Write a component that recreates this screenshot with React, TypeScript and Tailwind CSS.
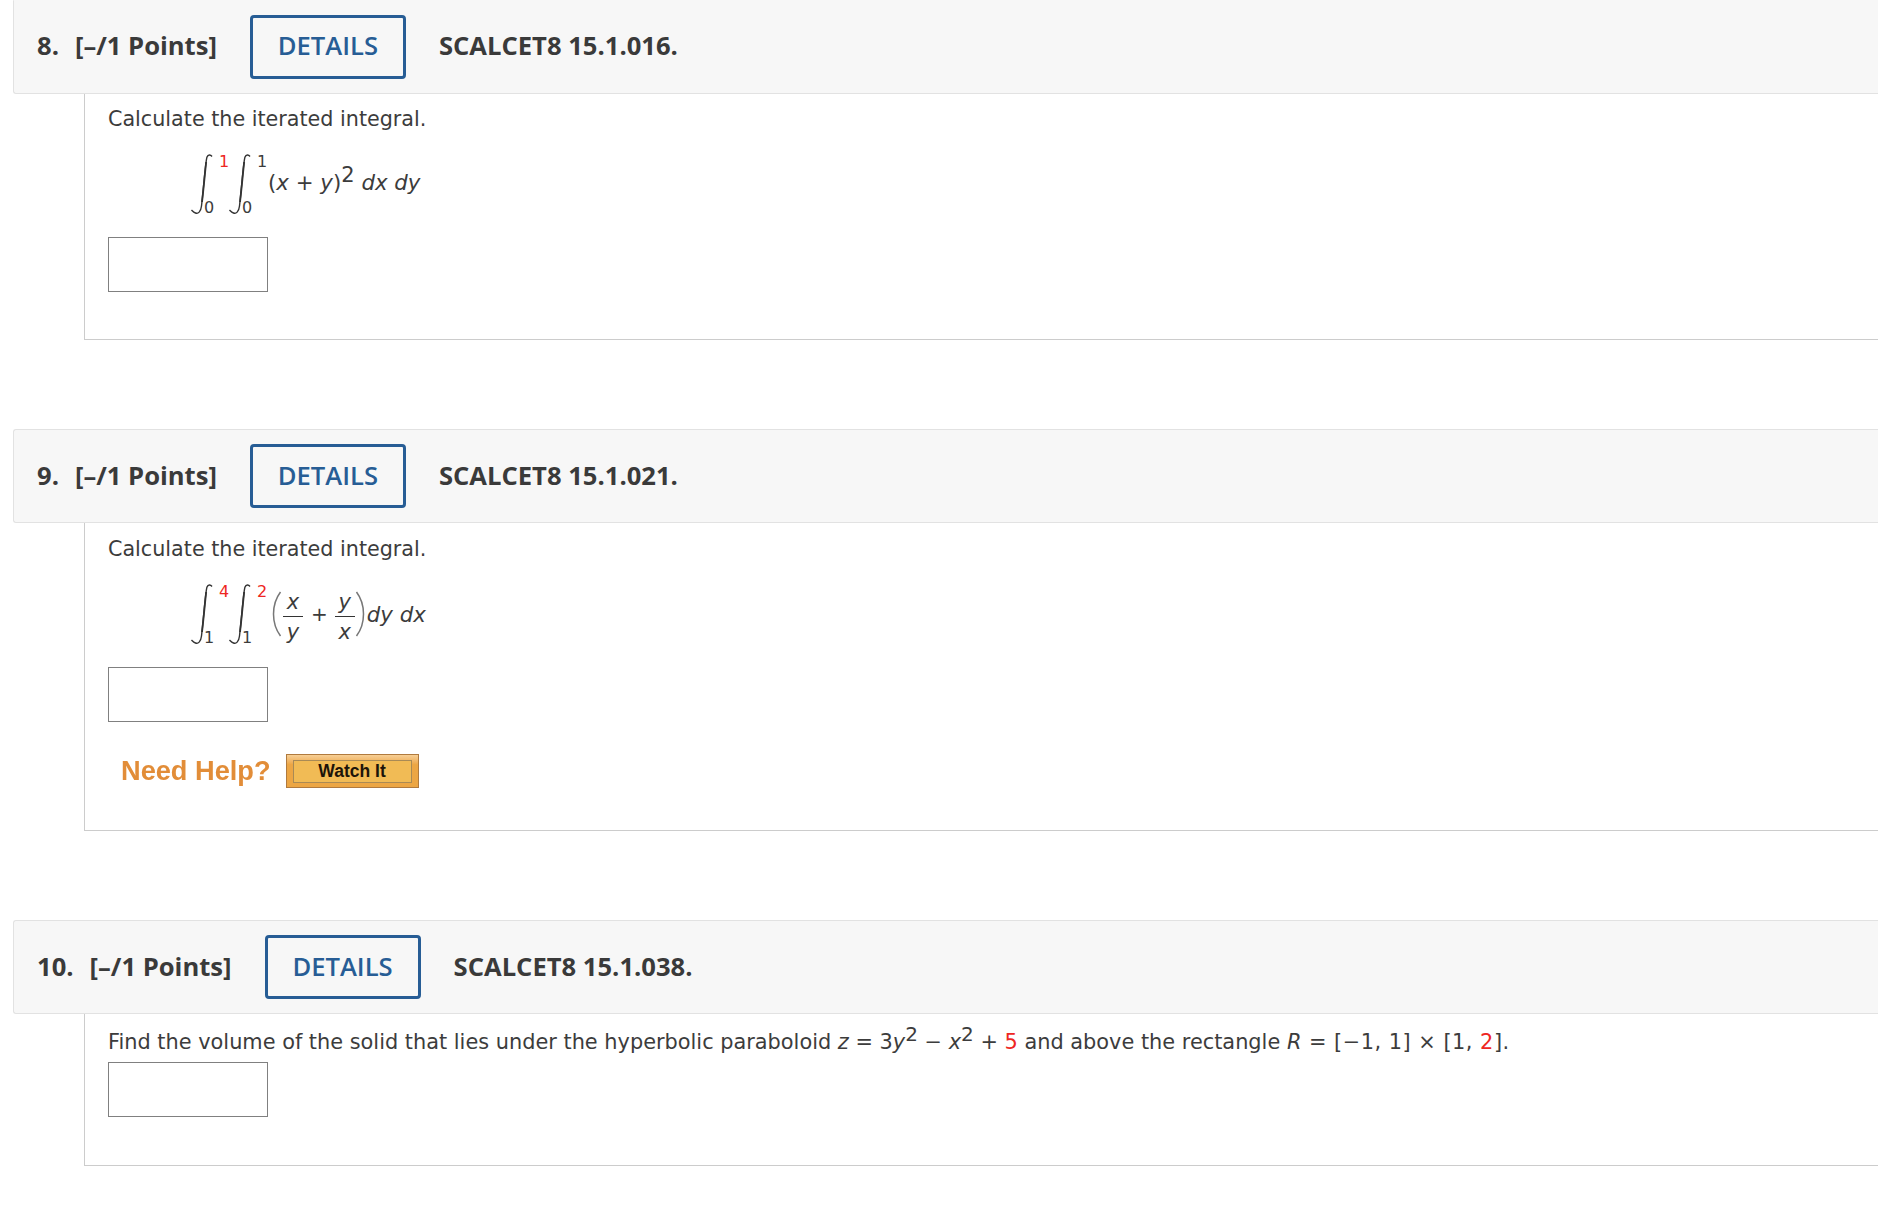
import React from "react";

const mathFont = "font-['DejaVu_Sans',Verdana,sans-serif]";

// tall integral sign, the source page has it as a small image
function IntegralSign() {
  return (
    <svg width="24" height="60" viewBox="0 0 24 60" className="shrink-0" fill="none">
      <path d="M22 2.5 C20.5 0.5 18 0.5 17 3 C15.5 7 14 30 11.5 52 C10.8 58 8 60 5.5 59 C3.5 58.3 2.5 57 1.5 56" stroke="#333" strokeWidth="1.4" />
      <path d="M16.2 8 C15 18 13.5 36 12 48" stroke="#333" strokeWidth="1.8" />
    </svg>
  );
}

function Integral({ upper, lower, red, gapRight }: { upper: string; lower: string; red?: boolean; gapRight: string }) {
  return (
    <div className={`flex h-[60px] items-stretch ${gapRight}`}>
      <IntegralSign />
      <div className="ml-[-10px] flex flex-col justify-between text-[16px] leading-[16px]">
        <div className={`ml-[15px] ${red ? "text-[#ee2622]" : "text-[#3c3c3c]"}`}>{upper}</div>
        <div className="mb-[-2px]">{lower}</div>
      </div>
    </div>
  );
}

function Fraction({ top, bottom }: { top: string; bottom: string }) {
  return (
    <div className="mt-[3px] flex w-[20px] flex-col items-center text-[21px] italic">
      <div className="h-[30px] w-full text-center leading-[32px]">{top}</div>
      <div className="h-px w-full bg-[#333]" />
      <div className="h-[29px] w-full text-center leading-[31px]">{bottom}</div>
    </div>
  );
}

function BigParen({ flip }: { flip?: boolean }) {
  return (
    <svg width="10" height="46" viewBox="0 0 10 46" fill="none" className={flip ? "-scale-x-100" : ""}>
      <path d="M8.5 1 C2.5 9 1.5 16 1.5 23 C1.5 30 2.5 37 8.5 45" stroke="#777" strokeWidth="1.5" />
    </svg>
  );
}

function AnswerBox() {
  return <div className="h-[55px] w-[160px] border border-[#808080] bg-white" />;
}

function Question({
  num,
  code,
  numGap,
  headClass = "",
  bodyClass,
  children,
}: {
  num: string;
  code: string;
  numGap: string;
  headClass?: string;
  bodyClass: string;
  children: React.ReactNode;
}) {
  return (
    <div>
      <div className={`flex h-[94px] items-center rounded-l-[3px] border border-r-0 border-[#e2e2e2] bg-[#f7f7f7] pl-[23px] font-['Open_Sans',sans-serif] text-[25.6px] font-bold text-[#3a3a3a] ${headClass}`}>
        <span className={numGap}>{num}</span>
        <span>[–/1 Points]</span>
        <div className="ml-[33px] flex h-[64px] w-[156px] items-center justify-center rounded-[4px] border-[3px] border-[#275d95] text-[25.6px] font-semibold text-[#275d95]">
          DETAILS
        </div>
        <span className="ml-[33px]">{code}</span>
      </div>
      <div className={`ml-[71px] border-b border-l border-[#cccccc] pl-[23px] ${mathFont} text-[#3c3c3c] ${bodyClass}`}>{children}</div>
    </div>
  );
}

export default function App() {
  return (
    <div className="h-[1208px] w-full overflow-hidden bg-white pl-[13px]">
      <div className="flex flex-col gap-[89px]">
        <Question num="8." code="SCALCET8 15.1.016." numGap="mr-[16px]" headClass="rounded-tl-none border-t-[#f7f7f7] pb-px" bodyClass="h-[246px]">
          <p className="pt-[10px] text-[20.7px] leading-[30px]">Calculate the iterated integral.</p>
          <div className="ml-[82px] mt-[20px] flex items-center text-[21.3px]">
            <Integral upper="1" lower="0" red gapRight="w-[38px]" />
            <Integral upper="1" lower="0" gapRight="w-[40px]" />
            <span className="mt-[-3px] whitespace-pre">
              (<i>x</i> + <i>y</i>)<sup className="top-[-0.36em] text-[21px]">2</sup> <i>dx dy</i>
            </span>
          </div>
          <div className="mt-[23px]">
            <AnswerBox />
          </div>
        </Question>

        <Question num="9." code="SCALCET8 15.1.021." numGap="mr-[16px]" bodyClass="h-[308px]">
          <p className="pt-[11px] text-[20.7px] leading-[30px]">Calculate the iterated integral.</p>
          <div className="ml-[82px] mt-[20px] flex h-[60px] items-center text-[21.3px]">
            <Integral upper="4" lower="1" red gapRight="w-[38px]" />
            <Integral upper="2" lower="1" red gapRight="w-[44px]" />
            <BigParen />
            <div className="ml-px">
              <Fraction top="x" bottom="y" />
            </div>
            <span className="ml-[8px] mr-[7px] text-[20px]">+</span>
            <Fraction top="y" bottom="x" />
            <BigParen flip />
            <span className="ml-[2px] mt-[2px] whitespace-pre italic">dy dx</span>
          </div>
          <div className="mt-[23px]">
            <AnswerBox />
          </div>
          <div className="mt-[32px] flex items-center pl-[13px]">
            <span className="font-['Liberation_Sans',sans-serif] text-[27.2px] font-bold leading-[34px] text-[#e28d38] blur-[0.4px]">Need Help?</span>
            <div className="ml-[15px] flex h-[34px] w-[133px] items-center justify-center border border-[#b07a3e] bg-gradient-to-b from-[#f7cf95] to-[#eca644] to-30%">
              <div className="flex h-[23px] w-[119px] items-center justify-center border border-[#a98a55] bg-[#f1bb55] pt-px font-['Liberation_Sans',sans-serif] text-[17.5px] font-bold text-[#1c1409]">
                Watch It
              </div>
            </div>
          </div>
        </Question>

        <Question num="10." code="SCALCET8 15.1.038." numGap="mr-[16px]" bodyClass="h-[152px]">
          <p className="whitespace-pre pt-[13px] text-[20.86px] leading-[30px]">
            Find the volume of the solid that lies under the hyperbolic paraboloid <i>z</i> = 3<i>y</i>
            <sup className="top-[-0.42em] text-[20px]">2</sup> − <i>x</i>
            <sup className="top-[-0.42em] text-[20px]">2</sup> + <span className="text-[#ee2622]">5</span> and above the rectangle{" "}
            <span className="tracking-[0.5px]">
              <i>R</i> = [−1, 1] × [1, <span className="text-[#ee2622]">2</span>].
            </span>
          </p>
          <div className="mt-[5px]">
            <AnswerBox />
          </div>
        </Question>
      </div>
    </div>
  );
}
